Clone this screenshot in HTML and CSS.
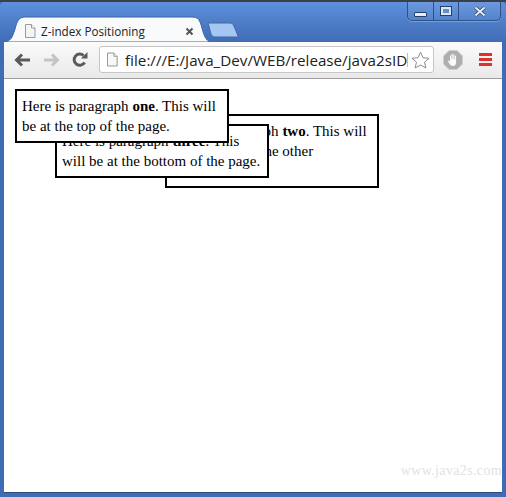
FILE: index.html
```html
<!DOCTYPE html>
<html lang="en">
<head>
    <meta charset="UTF-8">
    <title>Z-index Positioning</title>
    <link rel="stylesheet" href="styles.css">
</head>
<body>
    <div class="window">
        <div class="titlebar">
            <div class="tabstrip">
                <div class="tab">
                    <svg class="tab-shape" width="206" height="26" viewBox="0 0 206 26">
                        <path d="M0 26 C7 25 8 22 11 13 C13 5 15 1 21 1 L188 1 C194 1 196 4 198 12 C200 20 202 24 206 26 Z" fill="#f9fafb" stroke="#3a62a4" stroke-width="1"/>
                    </svg>
                    <svg class="page-icon tab-icon" width="12" height="14" viewBox="0 0 12 14">
                        <path d="M1.5 .5 H7.5 L11 4 V13.5 H1.5 Z" fill="#f4f4f4" stroke="#9a9a9a"/>
                        <path d="M7.5 .5 V4 H11" fill="#fff" stroke="#9a9a9a"/>
                    </svg>
                    <span class="tab-title">Z-index Positioning</span>
                    <svg class="tab-close" width="9" height="9" viewBox="0 0 9 9">
                        <path d="M1.5 1.5 L7.5 7.5 M7.5 1.5 L1.5 7.5" stroke="#555" stroke-width="2"/>
                    </svg>
                </div>
                <svg class="new-tab" width="32" height="16" viewBox="0 0 32 16">
                    <path d="M1 1 H23 C25 1 26 2 27 4 L31 14 C31 15 30 15 29 15 H8 C6 15 5 14 4 12 Z" fill="#a5c6f2" stroke="#41689f"/>
                </svg>
            </div>
            <div class="win-controls">
                <div class="win-btn win-min"><span class="min-glyph"></span></div>
                <div class="win-btn win-max"><span class="max-glyph"></span></div>
                <div class="win-btn win-close">
                    <svg width="14" height="11" viewBox="0 0 14 11">
                        <path d="M2.5 1.5 L11.5 9.5 M11.5 1.5 L2.5 9.5" stroke="#27406b" stroke-width="3.4"/>
                        <path d="M2.5 1.5 L11.5 9.5 M11.5 1.5 L2.5 9.5" stroke="#e8eef8" stroke-width="2"/>
                    </svg>
                </div>
            </div>
        </div>

        <div class="toolbar">
            <svg class="nav-icon" width="17" height="14" viewBox="0 0 17 14">
                <path d="M16 7 H4 M8 1.5 L2.5 7 L8 12.5" fill="none" stroke="#5a5a5a" stroke-width="3"/>
            </svg>
            <svg class="nav-icon" width="17" height="14" viewBox="0 0 17 14">
                <path d="M1 7 H13 M9 1.5 L14.5 7 L9 12.5" fill="none" stroke="#c4c4c4" stroke-width="3"/>
            </svg>
            <svg class="nav-icon" width="16" height="16" viewBox="0 0 16 16">
                <path d="M12.6 10.5 A5.6 5.6 0 1 1 11.6 3.6" fill="none" stroke="#5a5a5a" stroke-width="3"/>
                <path d="M9 6.5 H15.5 V0 Z" fill="#5a5a5a"/>
            </svg>
            <div class="omnibox">
                <svg class="page-icon" width="12" height="15" viewBox="0 0 12 15">
                    <path d="M.5 .5 H7.5 L11 4 V14.5 H.5 Z" fill="#f8f8f8" stroke="#8d8d8d"/>
                    <path d="M7.5 .5 V4 H11" fill="#fff" stroke="#8d8d8d"/>
                </svg>
                <span class="url">file:///E:/Java_Dev/WEB/release/java2sID</span>
                <span class="url-caret"></span>
                <svg class="star" width="19" height="18" viewBox="0 0 19 18">
                    <path d="M9.5 1.2 L12 6.7 L18 7.3 L13.5 11.2 L14.9 17 L9.5 14 L4.1 17 L5.5 11.2 L1 7.3 L7 6.7 Z" fill="#fff" stroke="#8c8c8c"/>
                </svg>
            </div>
            <svg class="adblock" width="20" height="20" viewBox="0 0 20 20">
                <path d="M6 .5 H14 L19.5 6 V14 L14 19.5 H6 L.5 14 V6 Z" fill="#aeaeae" stroke="#cfcfcf"/>
                <path d="M5.5 10.5 L7 11.5 V6 C7 5 8 5 8 6 V9 H8.5 V4.5 C8.5 3.5 9.7 3.5 9.7 4.5 V9 H10.2 V5 C10.2 4 11.4 4 11.4 5 V9.5 H11.9 V6.2 C11.9 5.2 13.1 5.2 13.1 6.2 V12 C13.1 14.5 12 16 10 16 C8 16 7.2 15 6.4 13.5 L4.8 11.2 C4.5 10.6 5 10.2 5.5 10.5 Z" fill="#fafafa"/>
            </svg>
            <div class="menu-btn">
                <span class="menu-line"></span>
                <span class="menu-line"></span>
                <span class="menu-line"></span>
            </div>
        </div>

        <div class="page">
            <p class="para para-one">Here is paragraph <b>one</b>. This will be at the top of the page.</p>
            <p class="para para-two">Here is paragraph <b>two</b>. This will be underneath the other elements.</p>
            <p class="para para-three">Here is paragraph <b>three</b>. This will be at the bottom of the page.</p>
            <span class="watermark">www.java2s.com</span>
        </div>
    </div>
</body>
</html>
```

FILE: styles.css
```css
html, body {
    margin: 0;
    height: 100%;
    overflow: hidden;
    background-color: #3a3f48;
}
.window {
    width: 506px;
    height: 497px;
    box-sizing: border-box;
    display: flex;
    flex-direction: column;
    padding: 0 4px 4px 4px;
    background-color: #3f6cb4;
    border-top: 2px solid #3a3f48;
}
.titlebar {
    height: 40px;
    margin: 0 -4px;
    padding: 0 5px 0 4px;
    display: flex;
    justify-content: space-between;
    background: linear-gradient(#5f90dc, #4d7cc6 55%, #3f6cb5);
    border-radius: 4px 4px 0 0;
}
.tabstrip {
    display: flex;
    align-items: flex-end;
}
.tab {
    position: relative;
    width: 204px;
    height: 25px;
    box-sizing: border-box;
    padding: 3px 14px 0 20px;
    display: flex;
    align-items: center;
}
.tab-shape {
    position: absolute;
    left: 0;
    top: -1px;
}
.tab-icon, .tab-title, .tab-close {
    position: relative;
}
.tab-title {
    margin-left: 5px;
    font-family: "Open Sans", sans-serif;
    font-size: 11.7px;
    color: #222;
    flex: 1;
}
.new-tab {
    margin: 0 0 4px -1px;
}
.win-controls {
    display: flex;
    height: 19px;
    box-sizing: border-box;
    border: 1px solid #2f5089;
    border-top: none;
    border-radius: 0 0 5px 5px;
    background: linear-gradient(#6d9ade, #5283cc);
    box-shadow: 0 1px 0 rgba(255, 255, 255, .25);
}
.win-btn {
    display: flex;
    align-items: center;
    justify-content: center;
    border-right: 1px solid #2f5089;
}
.win-min {
    width: 25px;
}
.win-max {
    width: 24px;
}
.win-close {
    width: 41px;
    border-right: none;
}
.min-glyph {
    width: 11px;
    height: 3px;
    margin-top: 6px;
    background-color: #e8eef8;
    border: 1px solid #27406b;
    border-radius: 1px;
}
.max-glyph {
    width: 6px;
    height: 4px;
    border: 2px solid #dbe6f5;
    outline: 1px solid #27406b;
}
.toolbar {
    height: 37px;
    box-sizing: border-box;
    padding: 0 11px 1px 10px;
    display: flex;
    align-items: center;
    background: linear-gradient(#fbfbfb, #e9e9e9);
    border-bottom: 1px solid #9e9e9e;
}
.nav-icon {
    margin-right: 12px;
    flex: none;
}
.omnibox {
    width: 335px;
    height: 27px;
    box-sizing: border-box;
    margin-left: -1px;
    padding: 0 3px 0 7px;
    display: flex;
    align-items: center;
    background-color: #fff;
    border: 1px solid #c6c6c6;
    border-radius: 3px;
    flex: none;
}
.url {
    margin-left: 7px;
    font-family: "Open Sans", sans-serif;
    font-size: 15.2px;
    color: #222;
    white-space: nowrap;
    overflow: hidden;
    width: 282px;
    flex: none;
}
.url-caret {
    width: 1px;
    height: 14px;
    background-color: #f5b45a;
}
.star {
    margin-left: 3px;
    flex: none;
}
.adblock {
    margin-left: 9px;
    flex: none;
}
.menu-btn {
    margin-left: 16px;
    display: flex;
    flex-direction: column;
    gap: 2px;
}
.menu-line {
    width: 13px;
    height: 3px;
    background-color: #e0302a;
}
.page {
    position: relative;
    flex: 1;
    background-color: #fff;
    border-bottom: 1px solid #2c4a7c;
}
.para {
    position: absolute;
    width: 200px;
    margin: 0;
    padding: 5px;
    border: 2px solid #000;
    background-color: #fff;
    font-family: "Liberation Serif", serif;
    font-size: 15px;
    line-height: 20px;
    color: #000;
}
.para-one {
    left: 11px;
    top: 10px;
    z-index: 3;
}
.para-two {
    left: 161px;
    top: 35px;
    z-index: 1;
}
.para-three {
    left: 51px;
    top: 45px;
    z-index: 2;
}
.watermark {
    position: absolute;
    right: 0;
    bottom: 13px;
    font-family: "Liberation Serif", serif;
    font-size: 14px;
    letter-spacing: .35px;
    color: #e2e2e2;
}
```
